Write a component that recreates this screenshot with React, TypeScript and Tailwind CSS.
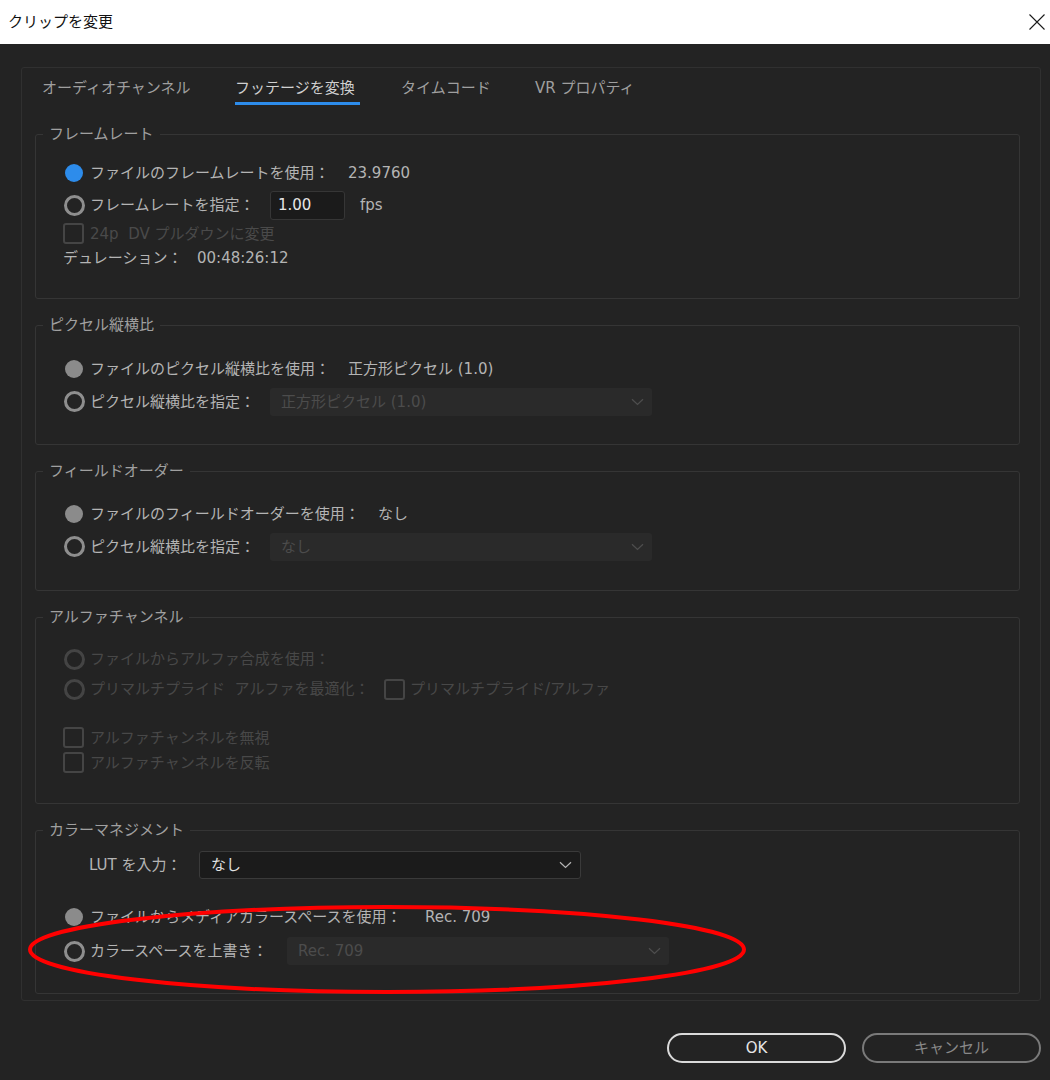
import React from "react";

type RadioKind = "blue" | "gray" | "ring" | "off";

function Radio({ kind }: { kind: RadioKind }) {
  return (
    <span className="w-[22px] h-[22px] flex items-center justify-center shrink-0">
      {kind === "blue" && <span className="w-[18px] h-[18px] rounded-full bg-[#2d8ceb]" />}
      {kind === "gray" && <span className="w-[18px] h-[18px] rounded-full bg-[#8b8b8b]" />}
      {kind === "ring" && <span className="w-[21px] h-[21px] rounded-full border-[3px] border-[#8e8e8e]" />}
      {kind === "off" && <span className="w-[21px] h-[21px] rounded-full border-[3px] border-[#444444]" />}
    </span>
  );
}

function Checkbox() {
  return <span className="w-[21px] h-[21px] rounded-[3px] border-2 border-[#454545] shrink-0" />;
}

function Chevron({ color }: { color: string }) {
  return (
    <svg width="13" height="8" viewBox="0 0 13 8" fill="none">
      <path d="M1 1.2l5.5 5.3L12 1.2" stroke={color} strokeWidth="1.2" />
    </svg>
  );
}

function Select({ value, className, active }: { value: string; className: string; active?: boolean }) {
  return (
    <div
      className={
        "h-[28px] rounded-[3px] flex items-center justify-between pl-[11px] pr-[8px] " +
        (active
          ? "bg-[#1b1b1b] border border-[#3a3a3a] text-[#e2e2e2] "
          : "bg-[#2a2a2a] text-[#4c4c4c] ") +
        className
      }
    >
      <span>{value}</span>
      <Chevron color={active ? "#b5b5b5" : "#4e4e4e"} />
    </div>
  );
}

function Group({ title, className, children }: { title: string; className: string; children: React.ReactNode }) {
  return (
    <fieldset className={"border border-[#353535] rounded-[3px] p-0 m-0 " + className}>
      <legend className="ml-[7px] px-[6px] text-[15px] leading-[22px] text-[#a0a0a0]">{title}</legend>
      {children}
    </fieldset>
  );
}

export default function App() {
  return (
    <div className="relative w-[1050px] h-[1080px] bg-[#232323] overflow-hidden font-['DejaVu_Sans','Noto_Sans_CJK_JP',sans-serif] text-[15px] leading-[22px] text-[#b4b4b4]">
      {/* title bar */}
      <div className="h-[44px] bg-white flex items-center justify-between pl-[8px] pr-[3px]">
        <span className="text-[15px] text-[#111111]">クリップを変更</span>
        <svg width="16" height="16" viewBox="0 0 16 16" className="mr-[2px]">
          <path d="M0.5 0.5L15.5 15.5M15.5 0.5L0.5 15.5" stroke="#1a1a1a" strokeWidth="1.1" />
        </svg>
      </div>

      <div className="pt-[23px] pl-[21px]">
        <div className="w-[1020px] h-[934px] border border-[#303030] rounded-[3px] flex flex-col">
          {/* tabs */}
          <div className="flex pt-[9px] pl-[20px] text-[#9f9f9f]">
            <span className="w-[150px] pb-[3px] border-b-[3px] border-transparent whitespace-nowrap">オーディオチャンネル</span>
            <span className="ml-[43px] w-[125px] pb-[3px] border-b-[3px] border-[#2d8ceb] text-[#d0d0d0] whitespace-nowrap">フッテージを変換</span>
            <span className="ml-[41px] w-[90px] pb-[3px] border-b-[3px] border-transparent whitespace-nowrap">タイムコード</span>
            <span className="ml-[44px] w-[100px] pb-[3px] border-b-[3px] border-transparent whitespace-nowrap">VR プロパティ</span>
          </div>

          <div className="mt-[18px] ml-[13px] mr-[20px] flex flex-col gap-[15px]">
            {/* frame rate */}
            <Group title="フレームレート" className="h-[176px]">
              <div className="pl-[27px] pt-[12px]">
                <div className="flex items-center h-[32px]">
                  <Radio kind="blue" />
                  <span className="ml-[5px] w-[258px]">ファイルのフレームレートを使用：</span>
                  <span>23.9760</span>
                </div>
                <div className="flex items-center h-[32px]">
                  <Radio kind="ring" />
                  <span className="ml-[5px] w-[180px]">フレームレートを指定：</span>
                  <div className="w-[75px] h-[29px] bg-[#1b1b1b] border border-[#363636] rounded-[3px] flex items-center pl-[7px] text-[#e6e6e6]">1.00</div>
                  <span className="ml-[15px]">fps</span>
                </div>
                <div className="flex items-center h-[25px]">
                  <Checkbox />
                  <span className="ml-[6px] text-[#4a4a4a]">24p&nbsp; DV プルダウンに変更</span>
                </div>
                <div className="flex items-center h-[24px]">
                  <span className="w-[134px]">デュレーション：</span>
                  <span>00:48:26:12</span>
                </div>
              </div>
            </Group>

            {/* pixel aspect ratio */}
            <Group title="ピクセル縦横比" className="h-[131px]">
              <div className="pl-[27px] pt-[16px]">
                <div className="flex items-center h-[33px]">
                  <Radio kind="gray" />
                  <span className="ml-[5px] w-[258px]">ファイルのピクセル縦横比を使用：</span>
                  <span>正方形ピクセル (1.0)</span>
                </div>
                <div className="flex items-center h-[33px]">
                  <Radio kind="ring" />
                  <span className="ml-[5px] w-[180px]">ピクセル縦横比を指定：</span>
                  <Select value="正方形ピクセル (1.0)" className="w-[382px]" />
                </div>
              </div>
            </Group>

            {/* field order */}
            <Group title="フィールドオーダー" className="h-[131px]">
              <div className="pl-[27px] pt-[15px]">
                <div className="flex items-center h-[33px]">
                  <Radio kind="gray" />
                  <span className="ml-[5px] w-[288px]">ファイルのフィールドオーダーを使用：</span>
                  <span>なし</span>
                </div>
                <div className="flex items-center h-[33px]">
                  <Radio kind="ring" />
                  <span className="ml-[5px] w-[180px]">ピクセル縦横比を指定：</span>
                  <Select value="なし" className="w-[382px]" />
                </div>
              </div>
            </Group>

            {/* alpha channel */}
            <Group title="アルファチャンネル" className="h-[198px]">
              <div className="pl-[27px] pt-[16px] text-[#484848]">
                <div className="flex items-center h-[30px]">
                  <Radio kind="off" />
                  <span className="ml-[5px]">ファイルからアルファ合成を使用：</span>
                </div>
                <div className="flex items-center h-[30px]">
                  <Radio kind="off" />
                  <span className="ml-[5px] w-[294px]">プリマルチプライド&nbsp; アルファを最適化：</span>
                  <Checkbox />
                  <span className="ml-[5px]">プリマルチプライド/アルファ</span>
                </div>
                <div className="flex items-center h-[25px] mt-[21px]">
                  <Checkbox />
                  <span className="ml-[6px]">アルファチャンネルを無視</span>
                </div>
                <div className="flex items-center h-[25px]">
                  <Checkbox />
                  <span className="ml-[6px]">アルファチャンネルを反転</span>
                </div>
              </div>
            </Group>

            {/* color management */}
            <Group title="カラーマネジメント" className="h-[175px]">
              <div className="pl-[27px] pt-[10px]">
                <div className="flex items-center h-[28px] pl-[26px]">
                  <span className="w-[110px]">LUT を入力：</span>
                  <Select value="なし" className="w-[382px]" active />
                </div>
                <div className="flex items-center h-[34px] mt-[21px]">
                  <Radio kind="gray" />
                  <span className="ml-[5px] w-[335px]">ファイルからメディアカラースペースを使用：</span>
                  <span>Rec. 709</span>
                </div>
                <div className="flex items-center h-[34px]">
                  <Radio kind="ring" />
                  <span className="ml-[5px] w-[197px]">カラースペースを上書き：</span>
                  <Select value="Rec. 709" className="w-[382px]" />
                </div>
              </div>
            </Group>
          </div>
        </div>
      </div>

      {/* buttons */}
      <div className="flex justify-end gap-[16px] pr-[9px] mt-[32px]">
        <button className="w-[179px] h-[30px] rounded-full border-2 border-[#dadada] text-[#e6e6e6] text-[15px] leading-[22px]">OK</button>
        <button className="w-[179px] h-[30px] rounded-full border-2 border-[#7a7a7a] text-[#888888] text-[15px] leading-[22px]">キャンセル</button>
      </div>

      {/* red annotation ellipse */}
      <svg className="absolute left-[28px] top-[904px] pointer-events-none" width="720" height="92" viewBox="0 0 720 92" fill="none">
        <ellipse cx="359" cy="45.5" rx="357" ry="42.5" stroke="#ff0000" strokeWidth="4" />
      </svg>
    </div>
  );
}
